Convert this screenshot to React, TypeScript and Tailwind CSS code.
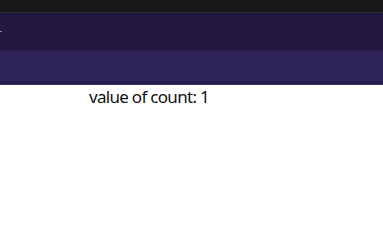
import React from "react";

export default function App() {
  return (
    <div className="w-[383px] h-[251px] bg-white overflow-hidden" style={{ fontFamily: '"Noto Sans", sans-serif' }}>
      <div className="h-[12px] bg-[#171717]" />
      <div className="h-[1px] bg-[#2b2b2b]" />
      <div className="relative h-[37px] bg-[#231740]">
        <div className="absolute left-0 top-[18px] w-[2px] h-[1px] bg-[#a070e0]" />
      </div>
      <div className="h-[1px] bg-[#271b48]" />
      <div className="h-[30px] bg-[#2e235a]" />
      <div className="h-[3px] bg-[#281c4a]" />
      <div className="h-[1px] bg-[#3a2d6a]" />
      <div className="pl-[89px] pt-[2px] text-[17px] leading-[20px] tracking-[-0.7px] text-[#111111]">value of count: 1</div>
    </div>
  );
}
